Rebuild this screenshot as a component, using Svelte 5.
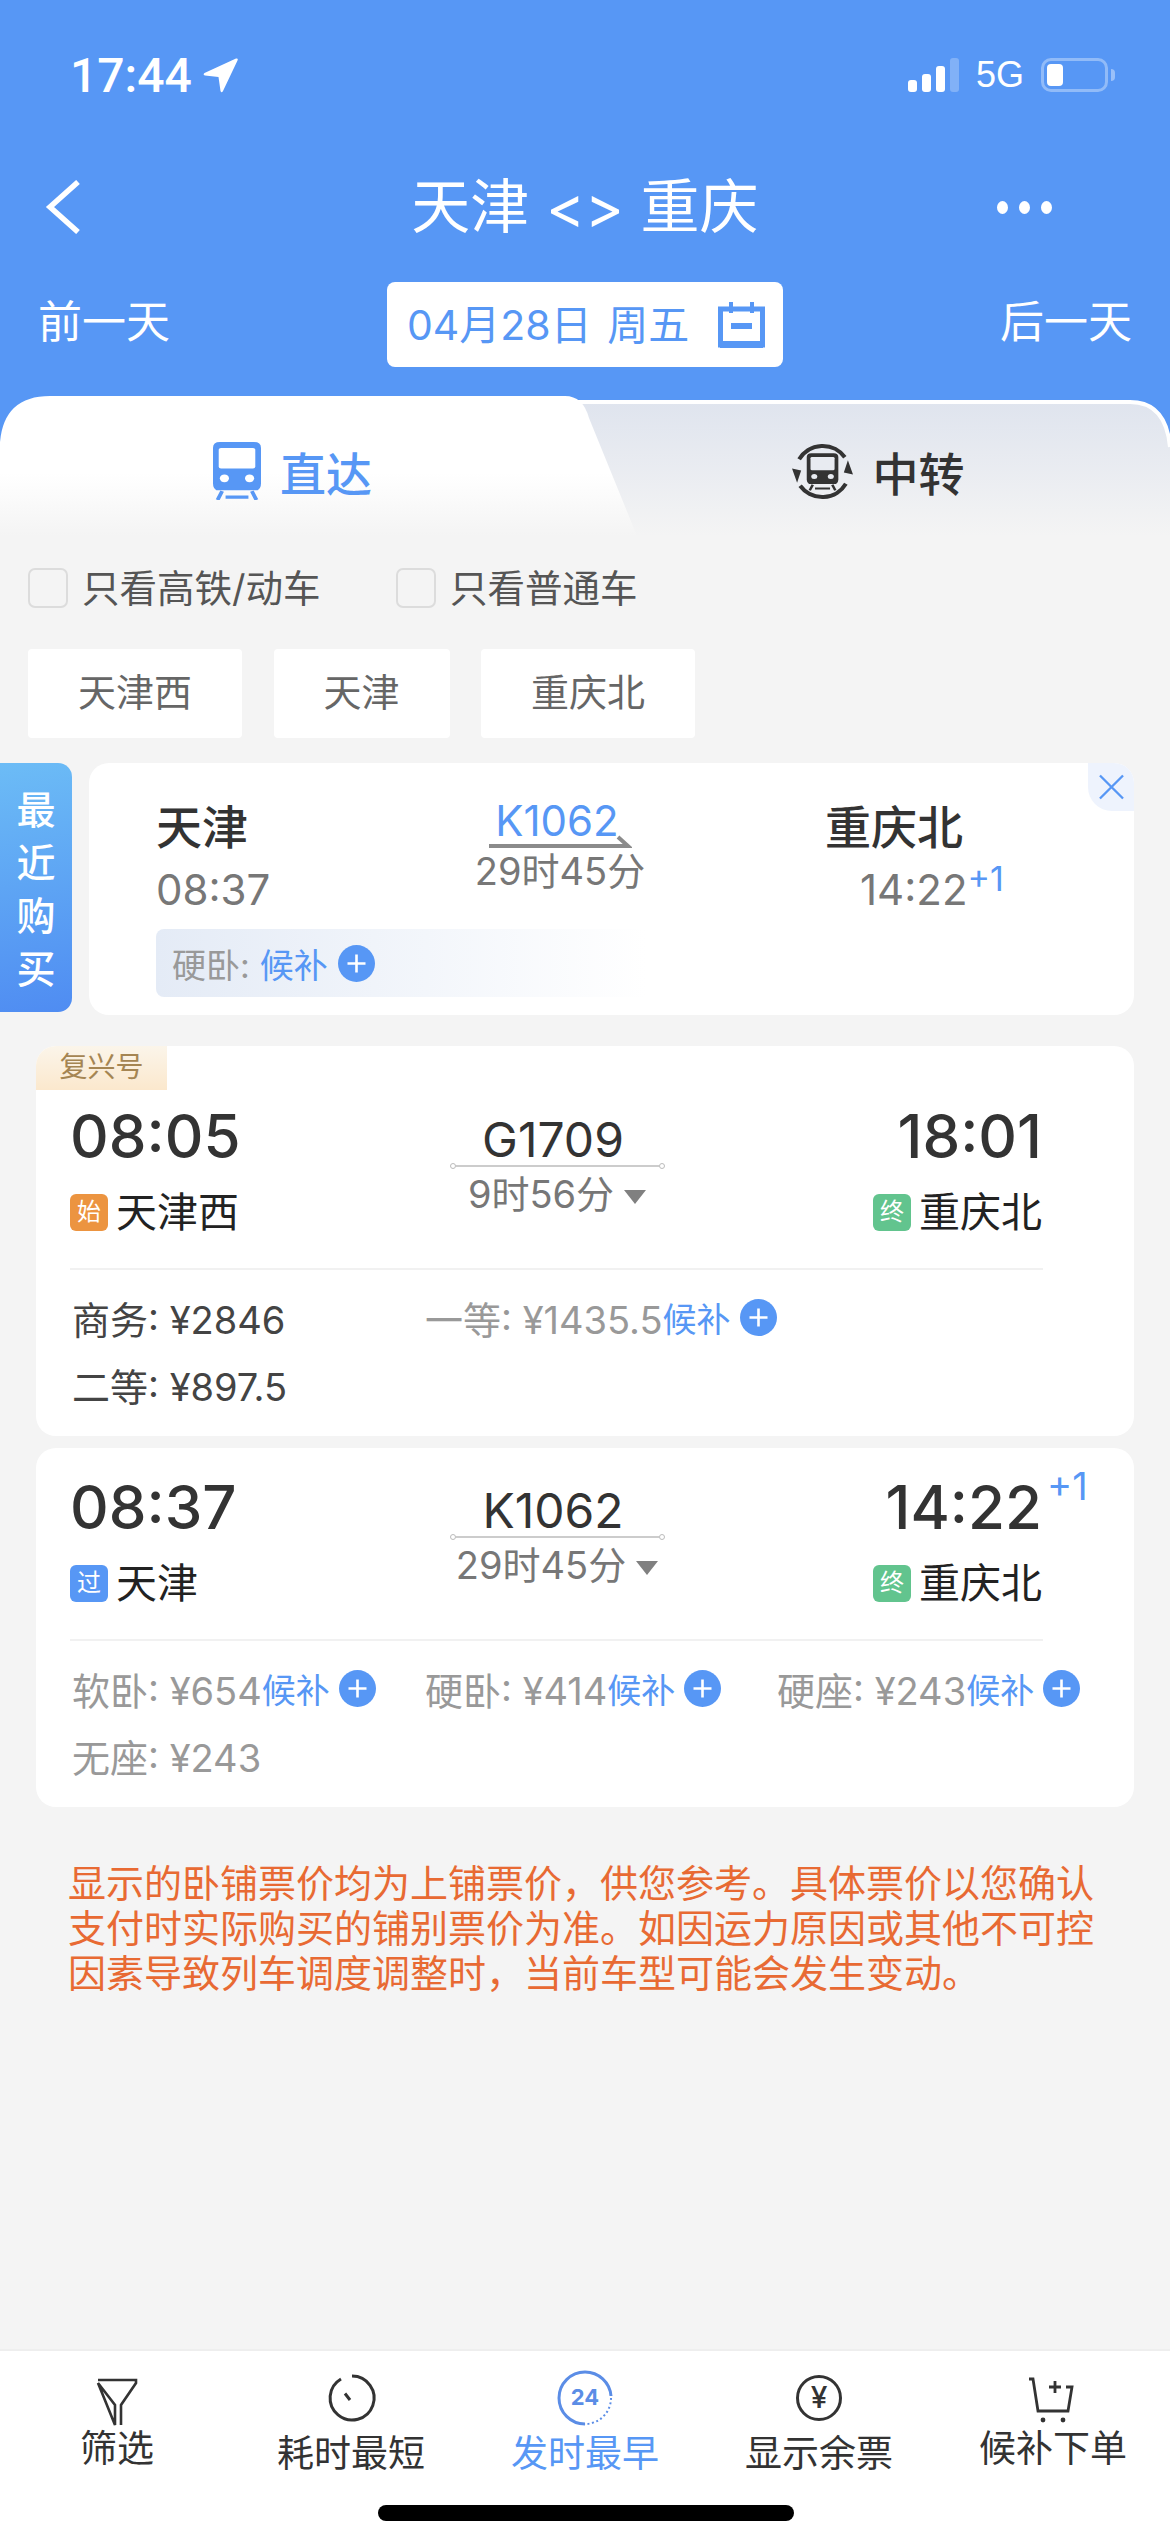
<script>
  const trains = [
    {
      tag: '复兴号', dep: '08:05', arr: '18:01', no: 'G1709', dur: '9时56分', plus: false,
      startBadge: '始', startCls: 'orange', from: '天津西', to: '重庆北',
      seats: [
        { n: '商务', p: '¥2846', on: true },
        { n: '一等', p: '¥1435.5', wait: true },
        { n: '二等', p: '¥897.5', on: true, br: true }
      ]
    },
    {
      tag: '', dep: '08:37', arr: '14:22', no: 'K1062', dur: '29时45分', plus: true,
      startBadge: '过', startCls: 'blue', from: '天津', to: '重庆北',
      seats: [
        { n: '软卧', p: '¥654', wait: true },
        { n: '硬卧', p: '¥414', wait: true },
        { n: '硬座', p: '¥243', wait: true },
        { n: '无座', p: '¥243' }
      ]
    }
  ];
  const bottom = [
    { k: 'filter', t: '筛选', up: true },
    { k: 'clock', t: '耗时最短' },
    { k: 'day', t: '发时最早', on: true },
    { k: 'yen', t: '显示余票' },
    { k: 'cart', t: '候补下单', up: true }
  ];
</script>

{#snippet plusIcon()}
  <svg class="plus" viewBox="0 0 37 37" aria-hidden="true">
    <circle cx="18.5" cy="18.5" r="18.5" fill="#5797f5" />
    <path d="M9.5 18.5h18M18.5 9.5v18" stroke="#fff" stroke-width="2.6" fill="none" />
  </svg>
{/snippet}

{#snippet trainGlyph(c, bg)}
  <path d="M6 0h30q6 0 6 6v36q0 5-3 7H3q-3-2-3-7V6q0-6 6-6z" fill={c} />
  <rect x="5" y="6" width="32" height="21" rx="2" fill={bg} />
  <circle cx="10" cy="37" r="4" fill={bg} />
  <circle cx="32" cy="37" r="4" fill={bg} />
  <path d="M8 50l-4 9M34 50l4 9M11 56h20" stroke={c} stroke-width="3.4" fill="none" />
{/snippet}

<div class="page">
  <header class="head">
    <div class="status">
      <div class="clock">
        <span>17:44</span>
        <svg class="loc" viewBox="0 0 35 35"><path d="M33 .5Q35.500 0 34.500 2.500L20 33q-1.500 2.500-2.500 0L15.500 19 2 17.500q-2.500-1-.5-2.500z" fill="#fff" /></svg>
      </div>
      <div class="sys">
        <div class="bars">
          <i class="b1"></i><i class="b2"></i><i class="b3"></i><i class="b4"></i>
        </div>
        <span class="net">5G</span>
        <div class="batt"><i></i></div>
        <div class="nub"></div>
      </div>
    </div>

    <div class="nav">
      <svg class="back" viewBox="0 0 36 54"><path d="M33 2L5 27l28 25" stroke="#fff" stroke-width="5.500" fill="none" /></svg>
      <div class="title">天津 &lt;&gt; 重庆</div>
      <div class="more"><i></i><i></i><i></i></div>
    </div>

    <div class="dates">
      <span>前一天</span>
      <div class="date">
        <span>04月28日 周五</span>
        <svg class="cal" viewBox="0 0 47 47">
          <path d="M2.500 8h42v36h-42z" stroke="#5797f5" stroke-width="5" fill="none" />
          <path d="M2 40h43v7H2zM11 1h4v11h-4zM32 1h4v11h-4zM13 22h21v6H13z" fill="#5797f5" />
        </svg>
      </div>
      <span>后一天</span>
    </div>
  </header>

  <div class="tabs">
    <svg class="tabbg" viewBox="0 0 1170 140" preserveAspectRatio="none" aria-hidden="true">
      <defs>
        <linearGradient id="gl" x1="0" y1="0" x2="0" y2="1">
          <stop offset="0.55" stop-color="#fff" />
          <stop offset="1" stop-color="#f4f4f4" />
        </linearGradient>
        <linearGradient id="gr" x1="0" y1="0" x2="0" y2="1">
          <stop offset="0" stop-color="#dfe4ee" />
          <stop offset="1" stop-color="#f4f4f4" />
        </linearGradient>
      </defs>
      <rect width="1170" height="60" fill="#5797f5" />
      <path d="M500 140V6h630q36 0 40 45v89z" fill="url(#gr)" />
      <path d="M500 6h630q36 0 40 45" fill="none" stroke="#fff" stroke-width="4" />
      <path d="M0 140V46Q4 0 50 0h515q18 0 24 22l48 118z" fill="url(#gl)" />
    </svg>
    <div class="tab active">
      <svg class="ico-t" viewBox="0 0 42 59" preserveAspectRatio="none">{@render trainGlyph('#5797f5', '#fff')}</svg>
      <span>直达</span>
    </div>
    <div class="tab">
      <svg class="ico-s" viewBox="0 0 62 62">
        <path d="M8 19A27 27 0 0 1 53 17M54 43A27 27 0 0 1 9 45" stroke="#333" stroke-width="4" fill="none" />
        <path d="M56 20l5 14-9-2zM6 42L1 28l9 2z" fill="#333" />
        <g transform="translate(15.500 13) scale(.74 .62)">{@render trainGlyph('#333', '#e8ebf1')}</g>
      </svg>
      <span>中转</span>
    </div>
  </div>

  <main class="body">
    <div class="checks">
      <label class="check first"><i></i><span>只看高铁/动车</span></label>
      <label class="check"><i></i><span>只看普通车</span></label>
    </div>

    <div class="chips">
      <span class="chip wide">天津西</span>
      <span class="chip">天津</span>
      <span class="chip wide">重庆北</span>
    </div>

    <section class="recent">
      <div class="rtab"><span>最</span><span>近</span><span>购</span><span>买</span></div>
      <div class="rcard">
        <div class="close">
          <svg viewBox="0 0 26 26"><path d="M1 1l24 24M25 1L1 25" stroke="#5797f5" stroke-width="2.400" fill="none" /></svg>
        </div>
        <div class="rgrid">
          <div class="rcol">
            <div class="rst">天津</div>
            <div class="rtime">08:37</div>
          </div>
          <div class="rmid">
            <div class="rno">K1062</div>
            <svg class="rarrow" viewBox="0 0 143 14"><path d="M0 11h139l-10-9" stroke="#8b8b8b" stroke-width="4" fill="none" /></svg>
            <div class="rdur">29时45分</div>
          </div>
          <div class="rcol rlast">
            <div class="rst">重庆北</div>
            <div class="rtime shift">14:22<sup>+1</sup></div>
          </div>
        </div>
        <div class="rseat">
          <span class="gr">硬卧:</span><span class="bl">候补</span>
          {@render plusIcon()}
        </div>
      </div>
    </section>

    {#each trains as t}
      <section class="card" class:tagged={t.tag}>
        {#if t.tag}<div class="tag">{t.tag}</div>{/if}
        <div class="route">
          <div class="side">
            <div class="time">{t.dep}</div>
            <div class="stn"><b class={t.startCls}>{t.startBadge}</b>{t.from}</div>
          </div>
          <div class="mid">
            <div class="no">{t.no}</div>
            <div class="track"><i></i><em></em><i></i></div>
            <div class="dur">{t.dur}<u></u></div>
          </div>
          <div class="side end">
            <div class="time">{t.arr}{#if t.plus}<sup>+1</sup>{/if}</div>
            <div class="stn"><b class="green">终</b>{t.to}</div>
          </div>
        </div>
        <div class="rule"></div>
        <div class="seats">
          {#each t.seats as s}
            <div class="seat" class:on={s.on} class:brk={s.br}>
              <span>{s.n}: {s.p}</span>
              {#if s.wait}<span class="wait">候补</span>{@render plusIcon()}{/if}
            </div>
          {/each}
        </div>
      </section>
    {/each}

    <p class="note">显示的卧铺票价均为上铺票价，供您参考。具体票价以您确认<br />支付时实际购买的铺别票价为准。如因运力原因或其他不可控<br />因素导致列车调度调整时，当前车型可能会发生变动。</p>
  </main>

  <footer class="foot">
    {#each bottom as b}
      <div class="fitem" class:on={b.on} class:up={b.up}>
        <div class="fic">
          {#if b.k === 'filter'}
            <svg viewBox="0 0 56 56"><path d="M9 10h38v3L32 35v20M26 55V35L9 13z" stroke="#333" stroke-width="2.600" fill="none" /></svg>
          {:else if b.k === 'clock'}
            <svg viewBox="0 0 56 56"><path d="M18 9A22 22 0 1 0 29 6M22 23.500l5 6.500" stroke="#333" stroke-width="3" fill="none" /></svg>
          {:else if b.k === 'day'}
            <svg viewBox="0 0 56 56">
              <path d="M28 2A26 26 0 0 0 28 54" stroke="#5b8de6" stroke-width="3" fill="none" />
              <path d="M28 2A26 26 0 0 1 54 26" stroke="#5b8de6" stroke-width="3" fill="none" />
              <path d="M54 28A26 26 0 0 1 28 54" stroke="#5b8de6" stroke-width="2" stroke-dasharray="2 2.500" fill="none" />
              <text x="28" y="35" text-anchor="middle" class="t24">24</text>
            </svg>
          {:else if b.k === 'yen'}
            <svg viewBox="0 0 56 56">
              <circle cx="28" cy="28" r="21.500" stroke="#333" stroke-width="3" fill="none" />
              <text x="28" y="38" text-anchor="middle" class="tyen">¥</text>
            </svg>
          {:else}
            <svg viewBox="0 0 56 56">
              <path d="M4 9h4l5 32h30l4-24h-6M24 17h12M30 11v12" stroke="#333" stroke-width="2.800" fill="none" />
              <circle cx="18" cy="50" r="2.400" fill="#333" /><circle cx="38" cy="50" r="2.400" fill="#333" />
            </svg>
          {/if}
        </div>
        <span>{b.t}</span>
      </div>
    {/each}
    <div class="home"></div>
  </footer>
</div>

<style>
  :global(body) { margin: 0; background: #f4f4f4; }
  .page {
    width: 1170px; height: 2532px; display: flex; flex-direction: column; overflow: hidden;
    background: #f4f4f4; color: #333;
    font-family: "Inter", "Noto Sans CJK SC", sans-serif;
  }
  .head { background: #5797f5; color: #fff; height: 396px; box-sizing: border-box; }
  .status { height: 150px; display: flex; justify-content: space-between; align-items: center; padding: 0 55px 0 70px; box-sizing: border-box; }
  .clock { display: flex; align-items: center; gap: 11px; font-family: "Roboto", sans-serif; font-size: 48px; font-weight: 500; }
  .loc { width: 35px; height: 35px; }
  .sys { display: flex; align-items: center; }
  .bars { display: flex; align-items: flex-end; gap: 5px; height: 34px; }
  .bars i { display: block; width: 9px; background: #fff; border-radius: 3px; }
  .b1 { height: 12px; } .b2 { height: 18px; } .b3 { height: 26px; }
  .bars .b4 { height: 34px; background: rgba(255,255,255,.25); }
  .net { font-family: "Liberation Sans", sans-serif; font-size: 36px; margin: 0 17px; }
  .batt { width: 67px; height: 34px; box-sizing: border-box; border: 3px solid rgba(255,255,255,.35); border-radius: 10px; padding: 3px; }
  .batt i { display: block; width: 16px; height: 22px; background: #fff; border-radius: 4px; }
  .nub { width: 4px; height: 12px; margin-left: 3px; background: rgba(255,255,255,.4); border-radius: 0 4px 4px 0; }

  .nav { height: 114px; display: flex; align-items: center; justify-content: space-between; padding: 0 118px 0 45px; position: relative; box-sizing: border-box; }
  .back { width: 36px; height: 54px; }
  .title { position: absolute; left: 0; right: 0; text-align: center; font-size: 59px; line-height: 114px; }
  .more { display: flex; gap: 11px; }
  .more i { width: 11px; height: 13px; border-radius: 50%; background: #fff; display: block; }

  .dates { margin-top: 18px; height: 85px; display: grid; grid-template-columns: 349px 396px 1fr; padding: 0 38px; align-items: center; font-size: 44px; line-height: 76px; }
  .dates > span { margin-bottom: 6px; }
  .dates > span:last-child { text-align: right; }
  .date { height: 85px; background: #fff; border-radius: 8px; display: flex; align-items: center; justify-content: space-between; padding: 0 18px 0 20px; color: #5797f5; font-size: 41px; word-spacing: 4px; white-space: nowrap; }
  .cal { width: 47px; height: 47px; }

  .tabs { height: 140px; position: relative; display: flex; }
  .tabbg { position: absolute; inset: 0; width: 100%; height: 100%; }
  .tab { flex: 1; position: relative; display: flex; align-items: center; justify-content: center; gap: 19px; font-size: 46px; font-weight: 500; padding-top: 10px; box-sizing: border-box; height: 140px; }
  .tab.active { color: #5797f5; }
  .ico-t { width: 48px; height: 58px; }
  .ico-s { width: 63px; height: 63px; }

  .body { flex: 1; min-height: 0; }
  .checks { display: flex; margin: 32px 0 0 28px; height: 40px; }
  .check { display: flex; align-items: center; gap: 14px; font-size: 37.5px; color: #555; }
  .check span { margin-bottom: 6px; }
  .check.first { width: 368px; }
  .check i { width: 40px; height: 40px; box-sizing: border-box; border: 2px solid #dcdcdc; border-radius: 7px; }

  .chips { display: flex; gap: 31.5px; margin: 41px 0 0 28px; }
  .chip { width: 176px; height: 89px; line-height: 87px; text-align: center; background: #fff; border-radius: 4px; font-size: 38px; color: #666; }
  .chip.wide { width: 214px; }

  .recent { display: flex; gap: 17px; margin: 25px 36px 0 0; height: 252px; align-items: flex-start; }
  .rtab { width: 72px; height: 249px; flex: none; background: linear-gradient(170deg, #6cbcf6, #4f8cf2); color: #fff; border-radius: 0 14px 14px 0; display: flex; flex-direction: column; align-items: center; justify-content: center; gap: 14px; font-size: 39px; line-height: 39px; font-weight: 500; padding-top: 3px; box-sizing: border-box; }
  .rcard { flex: 1; height: 252px; background: #fff; border-radius: 20px; position: relative; padding: 36px 0 0 67px; box-sizing: border-box; }
  .close { position: absolute; right: 0; top: 0; width: 46px; height: 48px; background: #eef3fd; border-radius: 0 20px 0 24px; display: flex; align-items: center; justify-content: center; }
  .close svg { width: 25px; height: 26px; }
  .rgrid { display: grid; grid-template-columns: 241px 320px auto; height: 124px; }
  .rst { font-size: 46px; line-height: 56px; font-weight: 500; color: #333; }
  .rtime { font-size: 42px; line-height: 50px; margin-top: 10px; color: #777; white-space: nowrap; }
  .rtime.shift { margin-left: 35px; }
  .rtime sup, .time sup { color: #5797f5; font-weight: 400; vertical-align: baseline; position: relative; }
  .rtime sup { font-size: 34px; line-height: 0; top: -14px; }
  .rlast { margin-left: 108px; }
  .rmid { display: flex; flex-direction: column; align-items: center; }
  .rno { font-size: 42px; line-height: 44px; color: #5797f5; }
  .rarrow { width: 143px; height: 14px; margin: -8px 0 0 6px; }
  .rdur { font-size: 38px; line-height: 46px; color: #777; margin: -1px 0 0 6px; }
  .rseat { margin: 6px 0 0 0; width: 510px; height: 68px; padding-left: 16px; box-sizing: border-box; border-radius: 8px; background: linear-gradient(90deg, #e4ebf6, rgba(255,255,255,0) 96%); display: flex; align-items: center; font-size: 34px; gap: 10px; }
  .gr { color: #999; } .bl { color: #5797f5; }

  .card { width: 1098px; margin: 31px 0 0 36px; background: #fff; border-radius: 20px; position: relative; padding: 28px 0 0; box-sizing: border-box; overflow: hidden; }
  .card + .card { margin-top: 12px; }
  .card.tagged { padding-top: 59px; }
  .tag { position: absolute; left: 0; top: 0; width: 131px; height: 44px; line-height: 42px; text-align: center; font-size: 28px; color: #a58552; background: linear-gradient(180deg, #fbf5ea, #fbe8cd); }
  .route { display: grid; grid-template-columns: 300px 374px 298px; padding-left: 34px; }
  .time { font-size: 60px; line-height: 62px; font-weight: 500; color: #333; white-space: nowrap; }
  .time sup { font-size: 38px; line-height: 0; position: absolute; top: 38px; margin-left: 5px; }
  .stn { display: flex; align-items: center; font-size: 41px; line-height: 50px; margin-top: 20px; color: #222; white-space: nowrap; }
  .stn b { width: 38px; height: 37px; line-height: 35px; text-align: center; border-radius: 6px; color: #fff; font-size: 24px; font-weight: 400; margin-right: 8px; }
  .orange { background: #ec9440; } .blue { background: #5797f5; } .green { background: #62c48e; }
  .end { text-align: right; align-items: flex-end; display: flex; flex-direction: column; }
  .mid { display: flex; flex-direction: column; align-items: center; }
  .no { font-size: 48px; line-height: 46px; margin: 12px 8px 0 0; color: #333; }
  .track { display: flex; align-items: center; width: 215px; height: 6px; }
  .track i { width: 6px; height: 6px; box-sizing: border-box; border: 1px solid #bbb; border-radius: 50%; }
  .track em { flex: 1; height: 2px; background: #ccc; }
  .dur { font-size: 38px; line-height: 44px; margin-top: 3px; color: #777; display: flex; align-items: center; gap: 10px; }
  .dur u { width: 0; height: 0; border: 11px solid transparent; border-top: 14px solid #808080; border-bottom: 0; margin-top: 6px; }
  .rule { height: 2px; background: #f1f1f1; margin: 31px 91px 0 34px; }
  .seats { display: grid; grid-template-columns: 353px 352px auto; padding: 14px 0 18px 36px; }
  .seat { height: 67px; display: flex; align-items: center; font-size: 38px; color: #999; white-space: nowrap; }
  .seat.on { color: #444; }
  .seat.brk { grid-column: 1; }
  .wait { font-size: 34px; color: #5797f5; }
  .plus { width: 37px; height: 37px; margin-left: 9px; flex: none; }
  .rseat .plus { margin-left: 0; }

  .note { margin: 54px 0 0 68px; font-size: 38px; line-height: 45px; color: #e86a33; white-space: nowrap; }

  .foot { height: 183px; flex: none; background: #fff; border-top: 2px solid #eee; box-sizing: border-box; display: grid; grid-template-columns: repeat(5, 234px); position: relative; }
  .fitem { display: flex; flex-direction: column; align-items: center; padding-top: 19px; font-size: 37px; color: #333; }
  .fitem.on { color: #5797f5; }
  .fitem span { line-height: 44px; margin-top: 6px; white-space: nowrap; }
  .fitem.up span { margin-top: 1px; }
  .fic { width: 56px; height: 56px; }
  .fic svg { width: 56px; height: 56px; display: block; }
  .t24 { font-size: 22px; font-weight: 700; fill: #5b8de6; }
  .tyen { font-size: 30px; font-weight: 500; fill: #333; }
  .home { position: absolute; left: 378px; top: 154px; width: 416px; height: 16px; border-radius: 8px; background: #000; }
</style>
